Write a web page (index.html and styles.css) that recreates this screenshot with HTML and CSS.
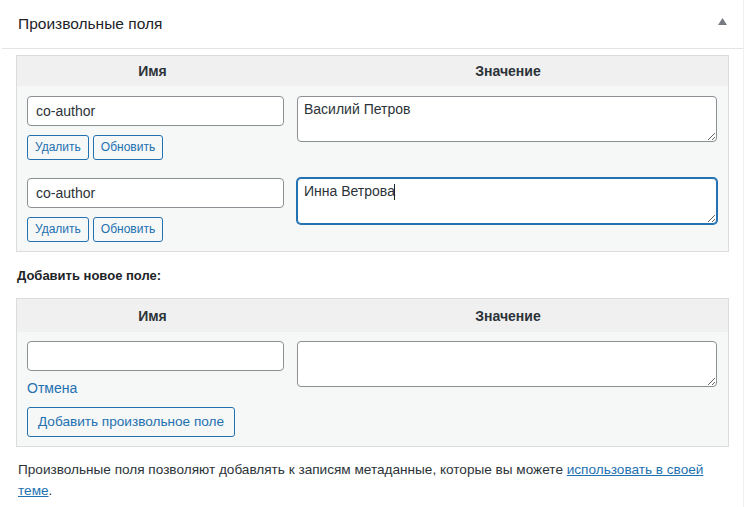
FILE: index.html
```html
<!DOCTYPE html>
<html lang="ru">
<head>
<meta charset="utf-8">
<title>Произвольные поля</title>
<link rel="stylesheet" href="styles.css">
</head>
<body>
<div class="postbox">
  <div class="postbox-header">
    <h2 class="postbox-title">Произвольные поля</h2>
    <span class="toggle-indicator" aria-hidden="true">
      <svg width="9" height="7" viewBox="0 0 9 7"><path d="M4.5 0 L9 7 L0 7 Z" fill="#787c82"/></svg>
    </span>
  </div>
  <div class="inside">
    <div class="meta-table">
      <div class="meta-head">
        <div class="col-left">Имя</div>
        <div class="col-right">Значение</div>
      </div>
      <div class="meta-row">
        <div class="cell-left">
          <input class="text-input" type="text" value="co-author">
          <div class="actions">
            <button class="btn btn-small" type="button">Удалить</button>
            <button class="btn btn-small" type="button">Обновить</button>
          </div>
        </div>
        <div class="cell-right">
          <textarea class="text-area" rows="2">Василий Петров</textarea>
        </div>
      </div>
      <div class="meta-row last">
        <div class="cell-left">
          <input class="text-input" type="text" value="co-author">
          <div class="actions">
            <button class="btn btn-small" type="button">Удалить</button>
            <button class="btn btn-small" type="button">Обновить</button>
          </div>
        </div>
        <div class="cell-right">
          <div class="area-wrap">
            <textarea class="text-area is-focused" rows="2">Инна Ветрова</textarea>
            <span class="caret"></span>
          </div>
        </div>
      </div>
    </div>

    <p class="add-title">Добавить новое поле:</p>

    <div class="meta-table new-table">
      <div class="meta-head">
        <div class="col-left">Имя</div>
        <div class="col-right">Значение</div>
      </div>
      <div class="meta-row new-row">
        <div class="cell-left">
          <input class="text-input" type="text" value="">
          <a class="cancel-link" href="#">Отмена</a>
          <button class="btn btn-add" type="button">Добавить произвольное поле</button>
        </div>
        <div class="cell-right">
          <textarea class="text-area" rows="2"></textarea>
        </div>
      </div>
    </div>

    <p class="note">Произвольные поля позволяют добавлять к записям метаданные, которые вы можете <a href="#">использовать в своей теме</a>.</p>
  </div>
</div>
</body>
</html>
```

FILE: styles.css
```css
html, body {
  margin: 0;
  padding: 0;
  background: #ffffff;
}

body {
  font-family: "Liberation Sans", Arial, sans-serif;
  color: #1d2327;
  font-size: 13px;
}

.postbox {
  width: 744px;
  border-right: 1px solid #f0f0f1;
  min-height: 507px;
  box-sizing: border-box;
}

.postbox-header {
  height: 48px;
  border-bottom: 1px solid #e2e4e7;
  display: flex;
  align-items: center;
  justify-content: space-between;
  padding: 0 16px 0 18px;
  margin-left: 2px;
  box-sizing: content-box;
}

.postbox-title {
  margin: 0;
  margin-left: -2px;
  font-size: 15.5px;
  font-weight: normal;
  color: #1d2327;
  line-height: 1.3;
}

.toggle-indicator {
  display: flex;
  margin-top: -6px;
}

.inside {
  padding: 6px 14px 0 16px;
}

.meta-table {
  border: 1px solid #dcdcde;
  background: #f6f7f7;
}

.meta-head {
  display: grid;
  grid-template-columns: 271px 1fr;
  height: 30px;
  align-items: center;
  background: #f0f0f1;
  font-weight: bold;
  font-size: 14px;
  color: #2c3338;
  text-align: center;
}

.new-table .meta-head {
  height: 33px;
}

.meta-row {
  display: grid;
  grid-template-columns: 271px 1fr;
  align-items: start;
}

.cell-left {
  padding: 10px 4px 0 10px;
  display: flex;
  flex-direction: column;
  align-items: flex-start;
}

.cell-right {
  padding: 10px 11px 0 9px;
}

.text-input {
  box-sizing: border-box;
  width: 257px;
  height: 30px;
  margin: 0;
  padding: 0 8px;
  border: 1px solid #8c8f94;
  border-radius: 4px;
  background: #fff;
  font-family: "Liberation Sans", Arial, sans-serif;
  font-size: 14px;
  color: #2c3338;
  outline: none;
}

.text-area {
  display: block;
  box-sizing: border-box;
  width: 100%;
  height: 46px;
  margin: 0;
  padding: 2px 6px;
  border: 1px solid #8c8f94;
  border-radius: 4px;
  background: #fff;
  font-family: "Liberation Sans", Arial, sans-serif;
  font-size: 14px;
  line-height: 20px;
  color: #2c3338;
  outline: none;
}

.text-area.is-focused {
  border-color: #2271b1;
  box-shadow: 0 0 0 1px #2271b1;
}

.area-wrap {
  position: relative;
}

.caret {
  position: absolute;
  left: 97px;
  top: 6px;
  width: 1px;
  height: 16px;
  background: #1d2327;
}

.actions {
  display: flex;
  gap: 4px;
  margin-top: 9px;
  margin-bottom: 8px;
}

.meta-row.last .actions {
  margin-bottom: 9px;
}

.btn {
  box-sizing: border-box;
  margin: 0;
  border: 1px solid #2271b1;
  border-radius: 3px;
  background: #f6f7f7;
  color: #2271b1;
  font-family: "Liberation Sans", Arial, sans-serif;
  cursor: pointer;
}

.btn-small {
  height: 25px;
  padding: 0 7px;
  font-size: 12px;
  line-height: 23px;
}

.btn-add {
  height: 30px;
  padding: 0 10px;
  font-size: 13.6px;
  line-height: 28px;
  margin-top: 10px;
  margin-bottom: 9px;
}

.new-row .cell-left {
  padding-top: 9px;
}

.new-row .cell-right {
  padding-top: 9px;
}

.cancel-link {
  margin-top: 8px;
  font-size: 14px;
  line-height: 18px;
  color: #2271b1;
  text-decoration: none;
}

.add-title {
  margin: 15px 0 13px 1px;
  font-size: 13px;
  font-weight: bold;
  line-height: 18px;
  color: #1d2327;
}

.note {
  margin: 12px 0 0 2px;
  font-size: 13.6px;
  line-height: 21px;
  color: #2c3338;
}

.note a {
  color: #2271b1;
  text-decoration: underline;
}
```
